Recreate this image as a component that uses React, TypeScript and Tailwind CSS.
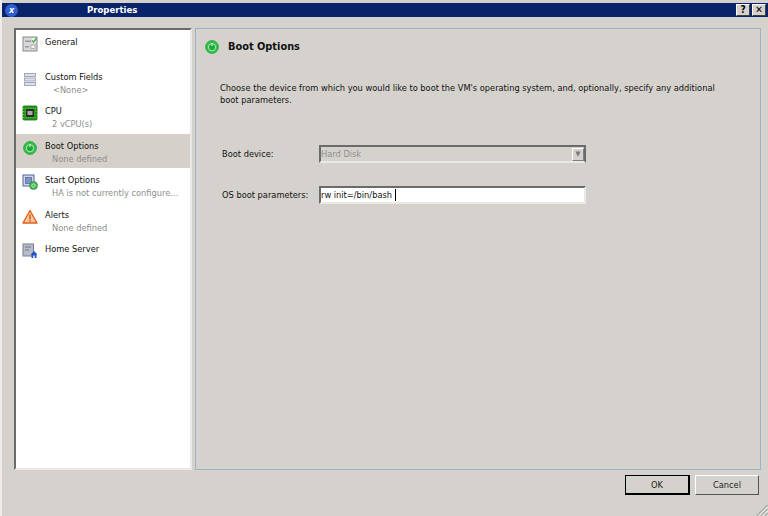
const font = "font-['DejaVu_Sans_Condensed','Liberation_Sans',sans-serif]";

function GeneralIcon() {
  return (
    <svg width="16" height="16" viewBox="0 0 16 16">
      <rect x="1" y="1" width="14" height="14" fill="#d8d8d4" stroke="#8a8a8a" />
      <rect x="3" y="4.5" width="6" height="1.5" fill="#8f98a8" />
      <rect x="3" y="10" width="4" height="1.5" fill="#8f98a8" />
      <rect x="9" y="9" width="4" height="3.5" fill="#f4f4f4" stroke="#9a9a9a" strokeWidth="0.7" />
      <rect x="10" y="2.5" width="4" height="4" fill="#f4f4f4" />
      <path d="M10 4.5l1.5 1.5 3-3.5" fill="none" stroke="#3cb043" strokeWidth="1.4" />
    </svg>
  );
}

function FieldsIcon() {
  return (
    <svg width="16" height="16" viewBox="0 0 16 16">
      <rect x="2.5" y="2.5" width="11" height="3" fill="#dfe1ea" stroke="#a5a9bd" />
      <rect x="2.5" y="7" width="11" height="3" fill="#dfe1ea" stroke="#a5a9bd" />
      <rect x="2.5" y="11.5" width="11" height="3" fill="#dfe1ea" stroke="#a5a9bd" />
    </svg>
  );
}

function CpuIcon() {
  return (
    <svg width="16" height="16" viewBox="0 0 16 16">
      <rect x="1" y="1" width="14" height="14" rx="1" fill="#1f9c1f" stroke="#0f6a12" strokeWidth="0.8" />
      <path d="M1 3.5h14M1 6.5h14M1 9.5h14M1 12.5h14" stroke="#b8d62e" strokeWidth="0.7" strokeDasharray="1 1.5" />
      <rect x="4" y="4" width="8" height="8" fill="#2d2d2d" />
      <rect x="5.5" y="6" width="5" height="4" fill="#a8a8a8" />
    </svg>
  );
}

function BootIcon() {
  return (
    <svg width="14" height="14" viewBox="0 0 14 14">
      <circle cx="7" cy="7" r="6.4" fill="#2fc14a" stroke="#2a9a3c" strokeWidth="0.8" />
      <circle cx="7" cy="7.2" r="3.6" fill="#1ba835" stroke="#c6f2c8" strokeWidth="0.9" />
      <path d="M7 3.2v3" stroke="#e6fbe6" strokeWidth="1" />
    </svg>
  );
}

function StartIcon() {
  return (
    <svg width="16" height="16" viewBox="0 0 16 16">
      <rect x="1" y="1" width="11" height="11" fill="#cfd6ea" stroke="#51679c" />
      <rect x="3.5" y="3.5" width="6" height="6" fill="#7f94c4" stroke="#3f5590" strokeWidth="0.6" />
      <circle cx="11.5" cy="11.5" r="4" fill="#3fb34f" stroke="#2a8c3a" strokeWidth="0.6" />
      <circle cx="11.5" cy="11.5" r="1.7" fill="none" stroke="#d8f5d8" strokeWidth="0.9" />
    </svg>
  );
}

function AlertIcon() {
  return (
    <svg width="16" height="16" viewBox="0 0 16 16">
      <path d="M8 1.5L15 14H1z" fill="#f8c9a0" stroke="#e0601c" strokeWidth="1.4" strokeLinejoin="round" />
      <rect x="7.2" y="5.5" width="1.6" height="5" fill="#e0601c" />
      <rect x="7.2" y="11.2" width="1.6" height="1.6" fill="#e0601c" />
    </svg>
  );
}

function HomeIcon() {
  return (
    <svg width="16" height="16" viewBox="0 0 16 16">
      <rect x="1" y="1" width="10.5" height="12" fill="#b9bdca" stroke="#777d90" />
      <path d="M3 4h6M3 7h4" stroke="#6f7589" />
      <path d="M8.5 11.5L12 8l3.5 3.5H14.5V15h-5v-3.5z" fill="#1f54c4" />
      <rect x="11.2" y="12.5" width="1.6" height="2.5" fill="#e8eefc" />
    </svg>
  );
}

function Grip() {
  return (
    <svg width="12" height="12" viewBox="0 0 12 12" className="absolute right-0 bottom-0">
      <path d="M11.5 1L1 11.5M11.5 5L5 11.5M11.5 9L9 11.5" stroke="#8a8a86" strokeWidth="1" />
      <path d="M11.5 3L3 11.5M11.5 7L7 11.5" stroke="#f4f3f0" strokeWidth="1" />
    </svg>
  );
}

const items = [
  { name: "General", sub: "", icon: <GeneralIcon /> },
  { name: "Custom Fields", sub: "<None>", icon: <FieldsIcon />, subClass: "pl-[8px]" },
  { name: "CPU", sub: "2 vCPU(s)", icon: <CpuIcon /> },
  { name: "Boot Options", sub: "None defined", icon: <BootIcon />, active: true },
  { name: "Start Options", sub: "HA is not currently configure…", icon: <StartIcon /> },
  { name: "Alerts", sub: "None defined", icon: <AlertIcon /> },
  { name: "Home Server", sub: "", icon: <HomeIcon /> },
];

export default function App() {
  return (
    <div className={`${font} relative flex h-[516px] w-[768px] flex-col overflow-hidden border-l-2 border-[#eeebe6] bg-[#d5d2cd] pt-[3px] text-[9.2px] text-[#111]`}>
      <div className="flex h-[14px] shrink-0 items-center bg-[#0a246a] pr-[2px] pl-[3px]">
        <div className="flex h-[13px] w-[13px] items-center justify-center rounded-full bg-[#2f5fd0] text-[9px] font-bold italic leading-none text-white">x</div>
        <div className="ml-[69px] text-[9.5px] font-bold text-white">Properties</div>
        <div className="ml-auto flex gap-[2px]">
          <div className="flex h-[12px] w-[14px] items-center justify-center border border-t-white border-r-[#404040] border-b-[#404040] border-l-white bg-[#d5d2cd] text-[10px] font-bold leading-none text-black">?</div>
          <div className="flex h-[12px] w-[14px] items-center justify-center border border-t-white border-r-[#404040] border-b-[#404040] border-l-white bg-[#d5d2cd] text-[10px] font-bold leading-none text-black">✕</div>
        </div>
      </div>

      <div className="flex h-[453px] shrink-0 gap-[3px] pt-[11px] pr-[7px] pl-[12px]">
        <div className="w-[178px] border-t-2 border-r-2 border-b-2 border-l-2 border-t-[#6b6b6b] border-r-[#ebe9e5] border-b-[#ebe9e5] border-l-[#6b6b6b] bg-white">
          {items.map((item) => (
            <div key={item.name} className={`flex h-[34.5px] gap-[7px] pt-[6px] pl-[5px] ${item.active ? "bg-[#d5d0c9]" : ""}`}>
              <div className="flex h-[16px] w-[17px] shrink-0 items-center justify-center">{item.icon}</div>
              <div className="-mt-[1px] leading-[13px] whitespace-nowrap">
                <div>{item.name}</div>
                <div className={`pl-[7px] text-[#8d8d8d] ${item.subClass ?? ""}`}>{item.sub}</div>
              </div>
            </div>
          ))}
        </div>

        <div className="flex-1 border border-[#9db3c8] px-[24px] pt-[10px]">
          <div className="-ml-[15px] flex items-center gap-[9px]">
            <BootIcon />
            <div className="text-[10.9px] font-bold">Boot Options</div>
          </div>
          <p className="mt-[27px] w-[500px] leading-[12px]">
            Choose the device from which you would like to boot the VM's operating system, and, optionally, specify any additional boot parameters.
          </p>
          <div className="mt-[39px] flex items-center">
            <div className="-mt-[1px] w-[99px] pl-[2px]">Boot device:</div>
            <div className="flex h-[18px] w-[267px] items-center justify-between border-t-2 border-r-2 border-b-2 border-l-2 border-t-[#6b6b6b] border-r-[#6b6b6b] border-b-[#ebe9e5] border-l-[#6b6b6b] text-[#8f8f8f]">
              <span>Hard Disk</span>
              <div className="flex h-[13px] w-[12px] items-center justify-center border border-t-white border-r-[#808080] border-b-[#808080] border-l-white bg-[#d5d2cd] text-[7px] leading-none text-[#777]">▼</div>
            </div>
          </div>
          <div className="mt-[23px] flex items-center">
            <div className="w-[99px] pl-[2px] whitespace-nowrap">OS boot parameters:</div>
            <div className="flex h-[18px] w-[267px] items-center border-t-2 border-r-2 border-b-2 border-l-2 border-t-[#6b6b6b] border-r-[#ebe9e5] border-b-[#ebe9e5] border-l-[#6b6b6b] bg-white">
              <span className="whitespace-pre">rw init=/bin/bash </span>
              <span className="h-[12px] w-px bg-black" />
            </div>
          </div>
        </div>
      </div>

      <div className="flex justify-end gap-[5px] pt-[5px] pr-[9px]">
        <div className="flex h-[20px] w-[65px] items-center justify-center border border-black border-r-2 border-b-2 text-[#222]">OK</div>
        <div className="flex h-[20px] w-[64px] items-center justify-center border border-t-white border-r-[#555] border-b-[#555] border-l-white text-[#222]">Cancel</div>
      </div>
      <Grip />
    </div>
  );
}
